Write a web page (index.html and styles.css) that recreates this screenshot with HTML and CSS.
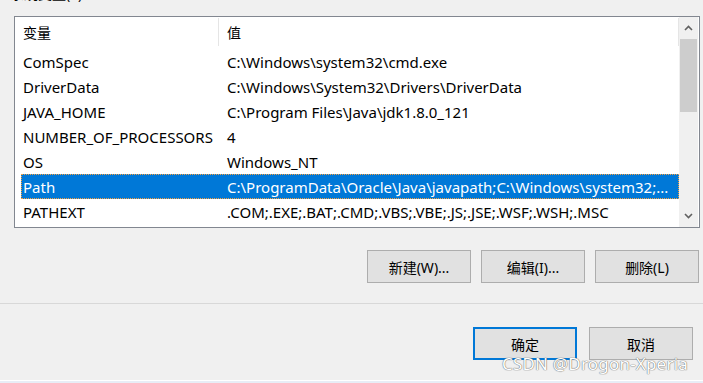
FILE: index.html
```html
<!DOCTYPE html>
<html lang="zh-CN">
<head>
    <meta charset="UTF-8">
    <meta name="viewport" content="width=device-width, initial-scale=1.0">
    <title>环境变量</title>
    <link rel="stylesheet" href="styles.css">
</head>
<body>
    <div class="dialog">
        <div class="caption"><span>系统变量(S)</span></div>

        <div class="list">
            <div class="list-body">
                <div class="list-header">
                    <div class="head-cell name">变量</div>
                    <div class="head-cell value">值</div>
                </div>
                <div class="row">
                    <div class="cell name">ComSpec</div>
                    <div class="cell">C:\Windows\system32\cmd.exe</div>
                </div>
                <div class="row">
                    <div class="cell name">DriverData</div>
                    <div class="cell">C:\Windows\System32\Drivers\DriverData</div>
                </div>
                <div class="row">
                    <div class="cell name">JAVA_HOME</div>
                    <div class="cell">C:\Program Files\Java\jdk1.8.0_121</div>
                </div>
                <div class="row">
                    <div class="cell name">NUMBER_OF_PROCESSORS</div>
                    <div class="cell">4</div>
                </div>
                <div class="row">
                    <div class="cell name">OS</div>
                    <div class="cell">Windows_NT</div>
                </div>
                <div class="row selected">
                    <div class="cell name">Path</div>
                    <div class="cell">C:\ProgramData\Oracle\Java\javapath;C:\Windows\system32;...</div>
                </div>
                <div class="row">
                    <div class="cell name">PATHEXT</div>
                    <div class="cell">.COM;.EXE;.BAT;.CMD;.VBS;.VBE;.JS;.JSE;.WSF;.WSH;.MSC</div>
                </div>
            </div>
            <div class="scrollbar">
                <svg class="arrow" width="9" height="6" viewBox="0 0 9 6"><path d="M1 5 L4.5 1.5 L8 5" fill="none" stroke="#606060" stroke-width="1.6"/></svg>
                <div class="thumb"></div>
                <div class="track"></div>
                <svg class="arrow" width="9" height="6" viewBox="0 0 9 6"><path d="M1 1 L4.5 4.5 L8 1" fill="none" stroke="#606060" stroke-width="1.6"/></svg>
            </div>
        </div>

        <div class="actions">
            <button class="btn">新建(W)...</button>
            <button class="btn">编辑(I)...</button>
            <button class="btn">删除(L)</button>
        </div>

        <div class="separator"></div>

        <div class="footer">
            <button class="btn default">确定</button>
            <button class="btn">取消</button>
        </div>

        <div class="taskbar"></div>

        <div class="watermark">CSDN @Drogon-Xperia</div>
    </div>
</body>
</html>
```

FILE: styles.css
```css
body {
    margin: 0;
    background-color: #f0f0f0;
    font-family: 'Noto Sans', 'Noto Sans CJK SC', sans-serif;
    font-size: 15px;
    color: #000;
}

.dialog {
    position: relative;
    width: 703px;
    height: 383px;
    overflow: hidden;
}

.caption {
    height: 3px;
    overflow: hidden;
    padding-left: 10px;
}

.caption span {
    display: block;
    margin-top: -14px;
    line-height: 16px;
    font-size: 14px;
}

.list {
    display: flex;
    margin: 13px 3px 0 14px;
    height: 210px;
    border: 1px solid #828790;
    background-color: #fff;
}

.list-body {
    flex: 1;
}

.list-header {
    display: flex;
    height: 32px;
    align-items: stretch;
    font-size: 14px;
}

.head-cell {
    display: flex;
    align-items: center;
    padding-left: 8px;
}

.head-cell.name {
    width: 195px;
    border-right: 1px solid #e5e5e5;
    margin: 1px 0 3px;
}

.head-cell.value {
    flex: 1;
    border-right: 1px solid #e5e5e5;
    margin: 1px 0 3px;
}

.row {
    display: flex;
    align-items: center;
    height: 25px;
    margin-left: 6px;
    box-sizing: border-box;
    white-space: nowrap;
    overflow: hidden;
}

.cell {
    padding-left: 2px;
}

.cell.name {
    width: 202px;
    flex-shrink: 0;
}

.row.selected {
    background-color: #0078d7;
    color: #fff;
    border: 1px dotted #f5a040;
}

.row.selected .cell.name {
    padding-left: 1px;
}

.scrollbar {
    width: 19px;
    margin-right: 1px;
    display: flex;
    flex-direction: column;
    align-items: center;
    background-color: #f0f0f0;
}

.arrow {
    margin: 8px 0;
}

.thumb {
    width: 17px;
    height: 73px;
    background-color: #cdcdcd;
}

.track {
    flex: 1;
}

.actions {
    display: flex;
    justify-content: flex-end;
    gap: 10px;
    margin: 22px 4px 0 0;
}

.btn {
    width: 104px;
    height: 33px;
    font-family: inherit;
    font-size: 14px;
    color: #000;
    background-color: #e1e1e1;
    border: 1px solid #adadad;
    padding: 0;
}

.separator {
    height: 1px;
    background-color: #d8d8d8;
    margin-top: 20px;
}

.footer {
    display: flex;
    justify-content: flex-end;
    gap: 12px;
    margin: 23px 10px 0 0;
}

.btn.default {
    border: 2px solid #0078d7;
}

.taskbar {
    margin-top: 20px;
    height: 4px;
    border-top: 1px solid #fff;
    background-color: #e8edf6;
}

.watermark {
    position: absolute;
    left: 502px;
    top: 352px;
    font-size: 17px;
    color: #fff;
    text-shadow: 0 0 1px #666, 0 0 1px #666;
    letter-spacing: 0.2px;
}
```
